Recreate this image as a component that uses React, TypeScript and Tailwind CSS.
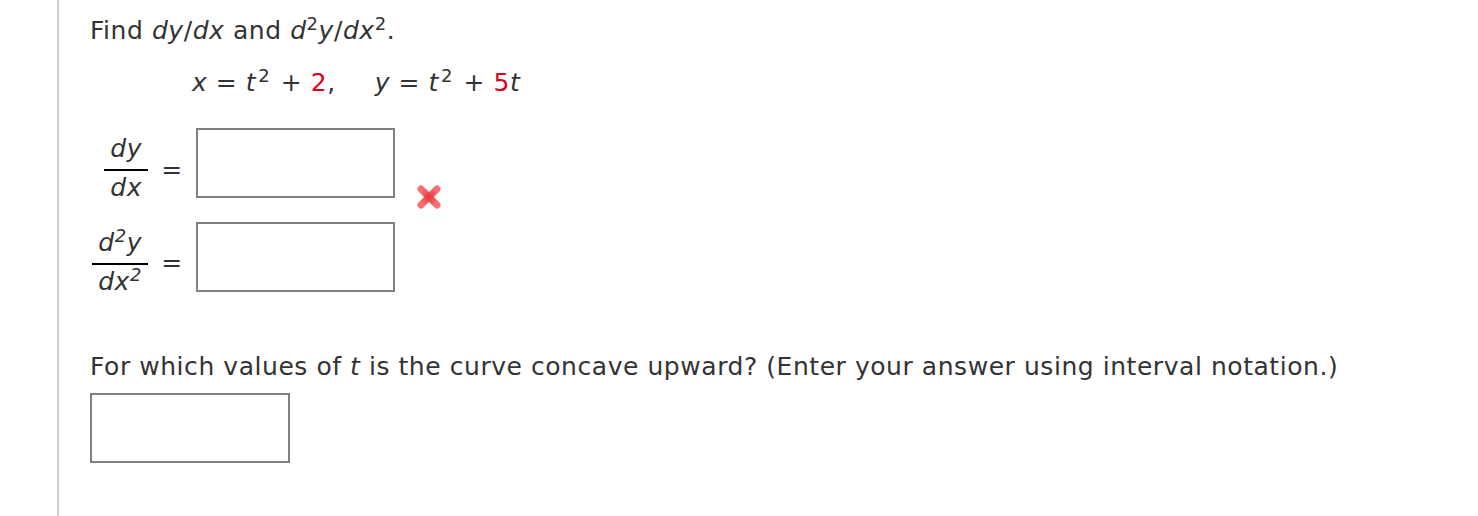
const font = { fontFamily: '"DejaVu Sans", Verdana, sans-serif' };

function Sup({ children, className = '' }: { children: React.ReactNode; className?: string }) {
  return (
    <span className={`relative -top-[9px] align-baseline text-[18px] leading-none ${className}`}>{children}</span>
  );
}

function Fraction({ top, bottom }: { top: React.ReactNode; bottom: React.ReactNode }) {
  return (
    <div className="mt-[6px] flex flex-col items-center italic">
      <div className="px-[6px] pb-[5px] leading-[30px]">{top}</div>
      <div className="h-[2px] w-full bg-black" />
      <div className="px-[6px] pt-[2px] leading-[30px]">{bottom}</div>
    </div>
  );
}

function AnswerBox({ className = '' }: { className?: string }) {
  return <div className={`h-[70px] w-[199px] border-2 border-[#808080] bg-white ${className}`} />;
}

function WrongMark() {
  return (
    <svg width="30" height="28" viewBox="0 0 30 28">
      <defs>
        <radialGradient id="xg" cx="50%" cy="50%" r="60%">
          <stop offset="0%" stopColor="#e5323a" />
          <stop offset="100%" stopColor="#f87075" />
        </radialGradient>
      </defs>
      <path d="M7 6 L23 22 M23 6 L7 22" stroke="url(#xg)" strokeWidth="7" strokeLinecap="round" />
    </svg>
  );
}

export default function App() {
  return (
    <div
      className="h-[516px] w-[1478px] bg-white text-[25px] tracking-[0.55px] text-[#333]"
      style={font}
    >
      <div className="ml-[57px] h-full border-l-2 border-[#cccccc] pl-[31px] pt-[16px]">
        {/* 문제 */}
        <p className="leading-[30px]">
          Find <i>dy</i>/<i>dx</i> and <i>d</i><Sup>2</Sup><i>y</i>/<i>dx</i><Sup>2</Sup>.
        </p>
        <p className="mt-[22px] pl-[102px] leading-[30px]">
          <i>x</i> = <i>t</i><Sup className="mx-[2px]">2</Sup> + <span className="text-[#e0001b]">2</span>,
          <span className="ml-[39px]"><i>y</i></span> = <i>t</i><Sup className="mx-[2px]">2</Sup> +{' '}
          <span className="text-[#e0001b]">5</span><i>t</i>
        </p>

        {/* 도함수 입력 */}
        <div className="mt-[30px] grid w-fit grid-cols-[58px_48px_199px_auto] grid-rows-[70px_70px] items-start gap-y-[24px]">
          <div className="flex justify-end">
            <Fraction top="dy" bottom="dx" />
          </div>
          <div className="mt-[27px] text-center leading-[30px]">=</div>
          <AnswerBox />
          <div className="mt-[55px] pl-[19px]">
            <WrongMark />
          </div>

          <div className="flex justify-end">
            <Fraction
              top={<>d<Sup>2</Sup>y</>}
              bottom={<>dx<Sup>2</Sup></>}
            />
          </div>
          <div className="mt-[26px] text-center leading-[30px]">=</div>
          <AnswerBox />
          <div />
        </div>

        {/* 오목 구간 */}
        <p className="mt-[60px] leading-[30px]">
          For which values of <i>t</i> is the curve concave upward? (Enter your answer using interval notation.)
        </p>
        <AnswerBox className="mt-[11px] w-[200px]" />
      </div>
    </div>
  );
}
